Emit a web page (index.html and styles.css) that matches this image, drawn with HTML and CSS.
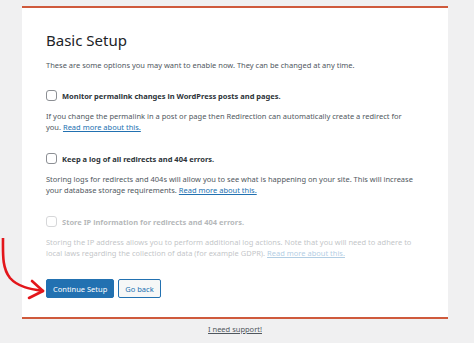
FILE: index.html
```html
<!DOCTYPE html>
<html lang="en">
<head>
  <meta charset="UTF-8">
  <title>Redirection - Basic Setup</title>
  <link rel="stylesheet" href="styles.css">
</head>
<body>
  <div class="wizard">
    <div class="card">
      <h1>Basic Setup</h1>
      <p class="intro">These are some options you may want to enable now. They can be changed at any time.</p>

      <div class="option">
        <label class="check"><span class="box"></span>Monitor permalink changes in WordPress posts and pages.</label>
        <p>If you change the permalink in a post or page then Redirection can automatically create a redirect for<br>you. <a href="#">Read more about this.</a></p>
      </div>

      <div class="option">
        <label class="check"><span class="box"></span>Keep a log of all redirects and 404 errors.</label>
        <p>Storing logs for redirects and 404s will allow you to see what is happening on your site. This will increase your database storage requirements. <a href="#">Read more about this.</a></p>
      </div>

      <div class="option disabled">
        <label class="check"><span class="box"></span>Store IP information for redirects and 404 errors.</label>
        <p>Storing the IP address allows you to perform additional log actions. Note that you will need to adhere to local laws regarding the collection of data (for example GDPR). <a href="#">Read more about this.</a></p>
      </div>

      <div class="actions">
        <button class="btn primary">Continue Setup</button>
        <button class="btn">Go back</button>
      </div>
    </div>
    <div class="support"><a href="#">I need support!</a></div>
  </div>

  <svg class="arrow" width="50" height="70" viewBox="0 0 50 70">
    <path d="M3 0 C3 16 2 30 10 40 C18 49 30 51 43 53" fill="none" stroke="#e3161b" stroke-width="2.6" stroke-linecap="round"/>
    <path d="M32 43 L43 53 L29 60" fill="none" stroke="#e3161b" stroke-width="2.6" stroke-linecap="round" stroke-linejoin="round"/>
  </svg>
</body>
</html>
```

FILE: styles.css
```css
body {
  margin: 0;
  background: #f0f0f1;
  font-family: "Noto Sans", "Open Sans", sans-serif;
  color: #50575e;
  font-size: 7.5px;
}
.wizard {
  width: 426px;
  margin-left: 22px;
  padding-top: 6px;
}
.card {
  background: #fff;
  border-top: 2px solid #cf5a3c;
  border-bottom: 2px solid #cf5a3c;
  padding: 22px 34px 19px 24px;
}
h1 {
  margin: 0 0 10px 0;
  font-size: 15px;
  line-height: 20px;
  font-weight: 400;
  color: #1d2327;
}
.intro {
  margin: 0 0 19px 0;
  line-height: 11px;
}
.option {
  margin-bottom: 20px;
}
.check {
  display: flex;
  align-items: center;
  gap: 5px;
  font-weight: 700;
  color: #2c3338;
}
.box {
  width: 9px;
  height: 9px;
  border: 1px solid #8c8f94;
  border-radius: 3px;
  background: #fff;
}
.option p {
  margin: 10px 0 0 0;
  line-height: 11px;
}
.option a {
  color: #2271b1;
}
.disabled {
  opacity: 0.35;
}
.actions {
  display: flex;
  gap: 4px;
  margin-top: 20px;
}
.btn {
  font-family: inherit;
  font-size: 7.5px;
  height: 19px;
  padding: 0 6px;
  border: 1px solid #2271b1;
  border-radius: 2px;
  background: #f6f7f7;
  color: #2271b1;
}
.btn.primary {
  background: #2271b1;
  color: #fff;
}
.support {
  text-align: center;
  padding-top: 5px;
}
.support a {
  color: #50575e;
}
.arrow {
  position: absolute;
  left: 0;
  top: 238px;
}
```
